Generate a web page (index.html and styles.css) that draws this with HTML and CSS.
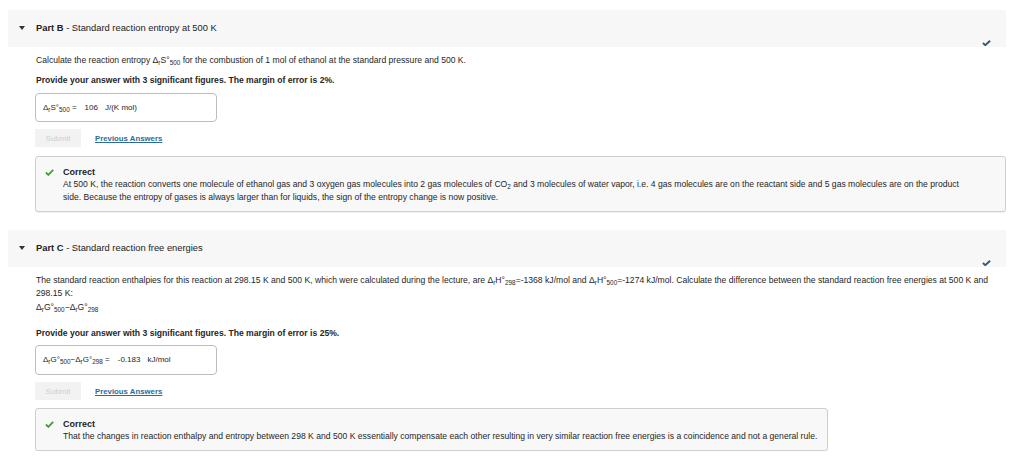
FILE: index.html
```html
<!DOCTYPE html>
<html>
<head>
<meta charset="utf-8">
<link rel="stylesheet" href="styles.css">
</head>
<body>
<div class="page">
  <section class="part">
    <div class="part-header">
      <span class="caret"></span>
      <span class="part-title"><b>Part B</b> - Standard reaction entropy at 500 K</span>
      <svg class="done" viewBox="0 0 10 7" width="9" height="6"><path d="M0.8 3.6 L3.6 6 L9.2 0.8" fill="none" stroke="#285b79" stroke-width="2.2"/></svg>
    </div>
    <div class="part-body">
      <p class="para first">Calculate the reaction entropy Δ<sub>r</sub>S°<sub>500</sub> for the combustion of 1 mol of ethanol at the standard pressure and 500 K.</p>
      <p class="para strong">Provide your answer with 3 significant figures. The margin of error is 2%.</p>
      <div class="answer">
        <span class="ans-label">Δ<sub>r</sub>S°<sub>500</sub> =</span>
        <span class="ans-value">106</span>
        <span class="ans-unit">J/(K mol)</span>
      </div>
      <div class="actions">
        <span class="submit">Submit</span>
        <a class="prev" href="#">Previous Answers</a>
      </div>
      <div class="feedback wide">
        <svg class="ok" viewBox="0 0 10 8" width="9" height="7"><path d="M0.9 4 L3.7 6.7 L9.2 1" fill="none" stroke="#3f9c34" stroke-width="2"/></svg>
        <div class="fb-text narrow">
          <div class="fb-title">Correct</div>
          <div class="fb-body">At 500 K, the reaction converts one molecule of ethanol gas and 3 oxygen gas molecules into 2 gas molecules of CO<sub>2</sub> and 3 molecules of water vapor, i.e. 4 gas molecules are on the reactant side and 5 gas molecules are on the product side. Because the entropy of gases is always larger than for liquids, the sign of the entropy change is now positive.</div>
        </div>
      </div>
    </div>
  </section>

  <section class="part part-c">
    <div class="part-header">
      <span class="caret"></span>
      <span class="part-title"><b>Part C</b> - Standard reaction free energies</span>
      <svg class="done" viewBox="0 0 10 7" width="9" height="6"><path d="M0.8 3.6 L3.6 6 L9.2 0.8" fill="none" stroke="#285b79" stroke-width="2.2"/></svg>
    </div>
    <div class="part-body">
      <p class="para first wrap">The standard reaction enthalpies for this reaction at 298.15 K and 500 K, which were calculated during the lecture, are Δ<sub>r</sub>H°<sub>298</sub>=-1368 kJ/mol and Δ<sub>r</sub>H°<sub>500</sub>=-1274 kJ/mol. Calculate the difference between the standard reaction free energies at 500 K and 298.15 K:</p>
      <p class="para expr">Δ<sub>r</sub>G°<sub>500</sub>−Δ<sub>r</sub>G°<sub>298</sub></p>
      <p class="para strong">Provide your answer with 3 significant figures. The margin of error is 25%.</p>
      <div class="answer">
        <span class="ans-label">Δ<sub>r</sub>G°<sub>500</sub>−Δ<sub>r</sub>G°<sub>298</sub> =</span>
        <span class="ans-value">-0.183</span>
        <span class="ans-unit">kJ/mol</span>
      </div>
      <div class="actions">
        <span class="submit">Submit</span>
        <a class="prev" href="#">Previous Answers</a>
      </div>
      <div class="feedback">
        <svg class="ok" viewBox="0 0 10 8" width="9" height="7"><path d="M0.9 4 L3.7 6.7 L9.2 1" fill="none" stroke="#3f9c34" stroke-width="2"/></svg>
        <div class="fb-text">
          <div class="fb-title">Correct</div>
          <div class="fb-body">That the changes in reaction enthalpy and entropy between 298 K and 500 K essentially compensate each other resulting in very similar reaction free energies is a coincidence and not a general rule.</div>
        </div>
      </div>
    </div>
  </section>
</div>
</body>
</html>
```

FILE: styles.css
```css
* { box-sizing: border-box; }
html, body { margin: 0; padding: 0; background: #fff; }
body {
  font-family: "Liberation Sans", Arial, Helvetica, sans-serif;
  color: #262626;
  font-size: 8.6px;
}
.page {
  width: 998px;
  margin-left: 8px;
  padding-top: 10px;
}
.part-header {
  height: 37px;
  background: #f7f7f7;
  display: flex;
  align-items: center;
  padding-left: 11px;
  padding-right: 15px;
  padding-bottom: 2px;
}
.caret {
  width: 0; height: 0;
  border-left: 3px solid transparent;
  border-right: 3px solid transparent;
  border-top: 4px solid #333;
  margin-right: 11px;
  margin-top: 1px;
}
.part-title { font-size: 9.35px; color: #222; }
.part-title b { font-weight: bold; }
.done { margin-left: auto; align-self: flex-end; margin-bottom: -1px; }
.part-body { padding-left: 27px; }
.para { margin: 7px 0 0; line-height: 13px; padding-left: 1px; }
.para.first { margin-top: 7px; }
.para.strong { font-weight: bold; }
.wrap { max-width: 968px; }
.expr { margin-top: 1px; }
.part-c .strong { margin-top: 13px; }
sub { font-size: 6.4px; line-height: 0; vertical-align: -2px; }
.answer {
  margin-top: 6px;
  width: 182px;
  height: 29px;
  border: 1px solid #bdbdbd;
  border-radius: 4px;
  background: #fff;
  display: flex;
  align-items: center;
  padding-left: 7px;
  font-size: 8px;
  padding-bottom: 1px;
}
.part-c .answer { height: 30px; margin-top: 5px; }
.ans-value { margin-left: 8px; }
.ans-unit { margin-left: 7px; }
.actions {
  margin-top: 7px;
  display: flex;
  align-items: center;
  height: 18px;
}
.submit {
  width: 46px;
  height: 18px;
  background: #f2f2f2;
  color: #cfcfcf;
  font-size: 8px;
  display: flex;
  align-items: center;
  justify-content: center;
}
.prev {
  margin-left: 14px;
  color: #2b6c9a;
  font-weight: bold;
  font-size: 7.8px;
  text-decoration: underline;
}
.feedback {
  margin-top: 9px;
  width: fit-content;
  background: #f8f8f8;
  border: 1px solid #cfcfcf;
  border-radius: 3px;
  box-shadow: 0 1px 1px rgba(0,0,0,0.06);
  display: flex;
  align-items: flex-start;
  padding: 9px 10px 7px 9px;
}
.feedback.wide { width: auto; padding-bottom: 7px; }
.part-c .feedback { margin-top: 8px; padding-bottom: 7px; }
.ok { margin-top: 3px; margin-right: 9px; flex: none; }
.fb-title { font-weight: bold; font-size: 9px; line-height: 12px; color: #222; }
.fb-body { line-height: 13px; font-size: 8.6px; }
.narrow { max-width: 915px; }
.part-c { margin-top: 18px; }
```
